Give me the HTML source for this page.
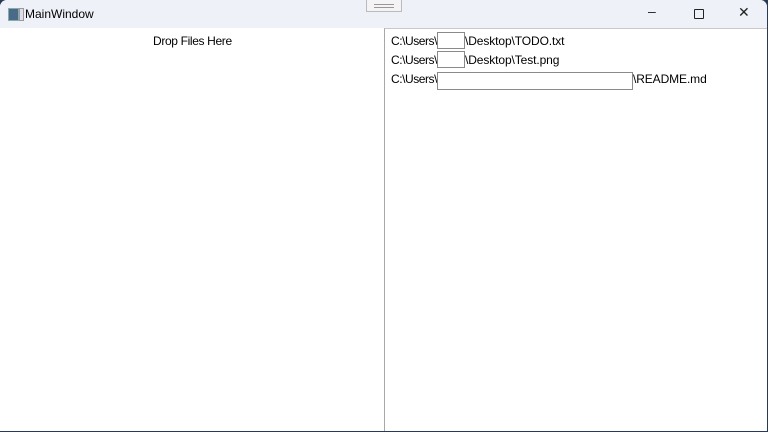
<!DOCTYPE html>
<html><head><style>
body{margin:0;width:768px;height:432px;overflow:hidden;background:#2a3a55;font-family:"Liberation Sans",sans-serif;}
.win{position:absolute;left:0;top:0;width:767px;height:431px;background:#fff;border-radius:7px 7px 0 0;overflow:hidden;}
.title{position:absolute;left:0;top:0;width:768px;height:28px;background:#eef2f8;}
.title span{position:absolute;left:25px;top:7px;font-size:12px;color:#000;}
.icon{position:absolute;left:8px;top:8px;width:9px;height:11px;background:#4a6a8a;border:1px solid #8aa;}
.icon2{position:absolute;left:19px;top:8px;width:3px;height:11px;background:#dde;border:1px solid #999;}
.grip{position:absolute;left:366px;top:0;width:34px;height:11px;background:#f4f4f4;border:1px solid #bbb;border-top:none;}
.grip:after{content:"";position:absolute;left:7px;top:4px;width:20px;height:2px;border-top:1px solid #999;border-bottom:1px solid #999;}
.ctl{position:absolute;top:6px;font-size:14px;color:#222;}
.drop{position:absolute;left:153px;top:34px;font-size:12px;letter-spacing:-0.35px;}
.panel{position:absolute;left:384px;top:28px;width:383px;height:403px;border-left:1px solid #a8a8a8;border-top:1px solid #c8c8c8;box-sizing:border-box;}
.line{position:absolute;left:391px;font-size:12px;letter-spacing:-0.1px;white-space:nowrap;height:18px;line-height:18px;}
.p{letter-spacing:-0.45px;}
.box{display:inline-block;vertical-align:top;height:17px;border:1px solid #8a8a8a;box-sizing:border-box;margin-top:0px;letter-spacing:0;}
.edge{position:absolute;left:0;top:431px;width:768px;height:1px;background:#243a5e;}
</style></head><body>
<div class="win">
<div class="title"><div class="icon"></div><div class="icon2"></div><span>MainWindow</span>
<div class="grip"></div>
<div class="ctl" style="left:648px;top:3px">&#8211;</div>
<div style="position:absolute;left:694px;top:9px;width:8px;height:8px;border:1px solid #222;border-radius:1px"></div>
<div class="ctl" style="left:738px;top:4px">&#10005;</div>
</div>
<div class="drop">Drop Files Here</div>
<div class="panel"></div>
<div class="line" style="top:32px"><span class="p">C:\Users\</span><span class="box" style="width:28px"></span>\Desktop\TODO.txt</div>
<div class="line" style="top:51px"><span class="p">C:\Users\</span><span class="box" style="width:28px"></span>\Desktop\Test.png</div>
<div class="line" style="top:70px"><span class="p">C:\Users\</span><span class="box" style="width:196px;height:18px;margin-top:2px"></span>\README.md</div>
</div>
<div class="edge"></div>
</body></html>
